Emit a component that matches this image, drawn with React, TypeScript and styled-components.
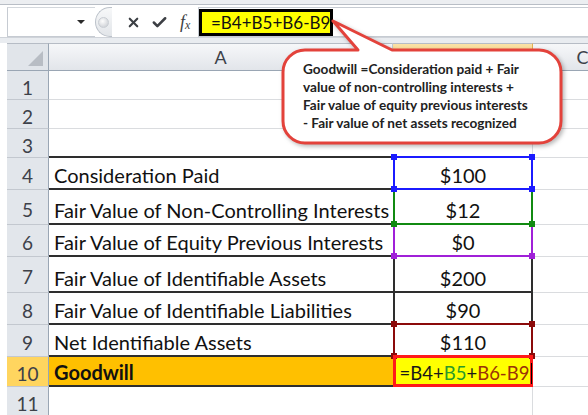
import styled, { createGlobalStyle } from "styled-components";
import { X, Check } from "lucide-react";

const GlobalStyle = createGlobalStyle`
  html, body { margin: 0; padding: 0; background: #fff; }
  body { font-family: Lato, "Noto Sans", sans-serif; }
`;

const Page = styled.div`
  position: relative;
  width: 588px;
  height: 415px;
  overflow: hidden;
  background: #fff;
`;

const TopStrip = styled.div`
  height: 4px;
  background: #eceef1;
  border-bottom: 1px solid #b9bec6;
`;

const FormulaBar = styled.div`
  display: flex;
  align-items: stretch;
  height: 32px;
  padding-left: 7px;
  box-sizing: border-box;
  background: #fff;
`;

const NameBox = styled.div`
  position: relative;
  width: 88px;
  margin-top: 2px;
  background: #fff;
  border-top: 1px solid #d3d7dc;
  border-bottom: 1px solid #c6cbd2;
  border-left: 1px solid #c6cbd2;
  box-sizing: border-box;
  display: flex;
  align-items: center;
  justify-content: flex-end;
  padding-right: 10px;
`;

const DropArrow = styled.span`
  width: 0;
  height: 0;
  border-left: 4px solid transparent;
  border-right: 4px solid transparent;
  border-top: 4px solid #2a2a2a;
`;

const Grip = styled.div`
  width: 17px;
  margin-top: 2px;
  border: 1px solid #bcc2ca;
  border-right: none;
  border-radius: 15px 0 0 15px;
  background: linear-gradient(#f7f8f9, #e2e5e9);
  box-sizing: border-box;
  display: flex;
  align-items: center;
  justify-content: flex-end;
  padding-right: 3px;
`;

const GripDot = styled.span`
  width: 9px;
  height: 9px;
  border-radius: 50%;
  background: radial-gradient(circle at 40% 35%, #fdfdfd, #c4c8ce);
  border: 1px solid #c9cdd3;
`;

const Tools = styled.div`
  width: 86px;
  margin-top: 2px;
  display: flex;
  align-items: center;
  padding-left: 14px;
  gap: 10px;
  box-sizing: border-box;
  color: #3c3f44;
`;

const Fx = styled.span`
  font-family: "Liberation Serif", serif;
  font-style: italic;
  font-size: 18px;
  color: #3c3f44;
  margin-left: 2px;
  sub {
    font-size: 12px;
    font-style: italic;
    vertical-align: -1px;
  }
`;

const FormulaField = styled.div`
  flex: 1;
  margin-top: 2px;
  border: 1px solid #c6cbd2;
  border-right: none;
  box-sizing: border-box;
  background: #fff;
  display: flex;
  align-items: stretch;
  padding: 1px 0 0 0;
`;

const FormulaHighlight = styled.div`
  width: 134px;
  height: 27px;
  box-sizing: border-box;
  background: #ffff00;
  border: 3px solid #000;
  font-family: Lato, sans-serif;
  font-size: 17px;
  color: #111;
  white-space: nowrap;
  display: flex;
  align-items: center;
  padding-left: 9px;
`;

const Band = styled.div`
  height: 5px;
  background: #e9ecf0;
  border-top: 1px solid #cfd3d9;
`;

const Sheet = styled.div`
  padding-left: 7px;
`;

const Row = styled.div<{ $h: number }>`
  display: grid;
  grid-template-columns: 42px 344px 140px 100px;
  grid-template-rows: ${p => p.$h}px;
  height: ${p => p.$h}px;
`;

const HeadCell = styled.div<{ $active?: boolean }>`
  display: flex;
  align-items: center;
  justify-content: center;
  box-sizing: border-box;
  font-size: 18px;
  color: #3d4149;
  background: ${p => (p.$active ? "linear-gradient(#fbe2a6, #f5c870)" : "linear-gradient(#f6f7f9, #e2e5ea)")};
  border-top: 1px solid #b6bcc5;
  border-right: 1px solid ${p => (p.$active ? "#e1b254" : "#c5cad1")};
  border-bottom: 1px solid #9aa6b4;
`;

const Corner = styled(HeadCell)`
  position: relative;
  background: #e1e5ea;
  border-right: 1px solid #9aa6b4;
`;

const SelectAll = styled.span`
  position: absolute;
  right: 5px;
  bottom: 4px;
  width: 0;
  height: 0;
  border-left: 15px solid transparent;
  border-bottom: 15px solid #b8bdc4;
`;

const RowHead = styled.div<{ $active?: boolean }>`
  display: flex;
  align-items: center;
  justify-content: center;
  box-sizing: border-box;
  padding-top: 4px;
  font-size: 19px;
  color: #3d4149;
  background: ${p => (p.$active ? "#ffd55f" : "#e2e6eb")};
  border-right: 1px solid #9aa6b4;
  border-bottom: 1px solid #c3c8cf;
`;

type Edge = "grid" | "thick" | "line";

const edgeColor = (e: Edge) => (e === "grid" ? "1px solid #dadcdf" : "2px solid #2e2e2e");

const LabelCell = styled.div<{ $bottom: Edge; $fill?: string; $bold?: boolean }>`
  display: flex;
  align-items: flex-end;
  box-sizing: border-box;
  padding: 0 0 1px 5px;
  font-size: 20px;
  color: #111;
  white-space: nowrap;
  overflow: hidden;
  font-weight: ${p => (p.$bold ? 700 : 400)};
  background: ${p => p.$fill || "#fff"};
  border-bottom: ${p => edgeColor(p.$bottom)};
`;

const ValueCell = styled.div<{ $bottom: Edge; $boxed?: boolean; $fill?: string }>`
  position: relative;
  display: flex;
  align-items: flex-end;
  justify-content: center;
  box-sizing: border-box;
  padding-bottom: 1px;
  font-size: 20px;
  color: #111;
  white-space: nowrap;
  background: ${p => p.$fill || "#fff"};
  border-bottom: ${p => edgeColor(p.$bottom)};
  border-left: ${p => (p.$boxed ? "2px solid #2e2e2e" : "none")};
  border-right: ${p => (p.$boxed ? "2px solid #2e2e2e" : "1px solid #dadcdf")};
`;

const GridCell = styled.div`
  box-sizing: border-box;
  border-bottom: 1px solid #dadcdf;
`;

const RefBox = styled.span<{ $color: string; $z: number; $w?: number }>`
  position: absolute;
  top: -2px;
  left: -2px;
  right: -2px;
  bottom: -2px;
  border: ${p => p.$w || 2}px solid ${p => p.$color};
  z-index: ${p => p.$z};
  pointer-events: none;
`;

const Handle = styled.span<{ $color: string; $pos: string }>`
  position: absolute;
  width: 6px;
  height: 6px;
  background: ${p => p.$color};
  ${p => p.$pos}
`;

const FormulaText = styled.span`
  position: relative;
  z-index: 12;
  font-size: 18.5px;
  white-space: nowrap;
  display: flex;
  align-items: center;
  margin-left: 6px;
  color: #1a1a1a;
`;

const Ref = styled.span<{ $color: string }>`
  color: ${p => p.$color};
`;

const Caret = styled.span`
  display: inline-block;
  width: 1px;
  height: 21px;
  margin-left: 2px;
  background: #000;
`;

const Callout = styled.div`
  position: absolute;
  left: 280px;
  top: 14px;
  width: 290px;
  height: 136px;
  z-index: 20;
`;

const CalloutText = styled.div`
  position: absolute;
  left: 23px;
  top: 46px;
  font-size: 13.6px;
  font-weight: 700;
  line-height: 18px;
  color: #222;
  white-space: nowrap;
`;

const corners = {
  tl: "top: -4px; left: -4px;",
  tr: "top: -4px; right: -4px;",
  bl: "bottom: -4px; left: -4px;",
  br: "bottom: -4px; right: -4px;",
};

const Marker = ({ color, z }: { color: string; z: number }) => (
  <RefBox $color={color} $z={z}>
    {Object.values(corners).map((pos, i) => (
      <Handle key={i} $color={color} $pos={pos} />
    ))}
  </RefBox>
);

type Line = {
  n: number;
  h: number;
  label?: string;
  value?: string;
  bottom: Edge;
  boxed?: boolean;
  marker?: [string, number];
};

const lines: Line[] = [
  { n: 1, h: 29, bottom: "grid" },
  { n: 2, h: 29, bottom: "grid" },
  { n: 3, h: 29, bottom: "thick" },
  { n: 4, h: 32, label: "Consideration Paid", value: "$100", bottom: "line", boxed: true, marker: ["#1b1bff", 9] },
  { n: 5, h: 35, label: "Fair Value of Non-Controlling Interests", value: "$12", bottom: "line", boxed: true, marker: ["#118a11", 8] },
  { n: 6, h: 32, label: "Fair Value of Equity Previous Interests", value: "$0", bottom: "line", boxed: true, marker: ["#a020d8", 7] },
  { n: 7, h: 36, label: "Fair Value of Identifiable Assets", value: "$200", bottom: "line", boxed: true },
  { n: 8, h: 32, label: "Fair Value of Identifiable Liabilities", value: "$90", bottom: "line", boxed: true },
  { n: 9, h: 32, label: "Net Identifiable Assets", value: "$110", bottom: "line", boxed: true, marker: ["#8b0a0a", 6] },
];

const CalloutShape = () => (
  <svg width="290" height="136" viewBox="0 0 290 136" style={{ filter: "drop-shadow(2px 2px 2px rgba(0,0,0,0.28))" }}>
    <path
      d="M25 36 L78 36 L53 7 L112 36 L259 36 A22 22 0 0 1 281 58 L281 107 A22 22 0 0 1 259 129 L25 129 A22 22 0 0 1 3 107 L3 58 A22 22 0 0 1 25 36 Z"
      fill="#fff"
      stroke="#e3423b"
      strokeWidth="3"
      strokeLinejoin="round"
    />
  </svg>
);

export default function App() {
  return (
    <Page>
      <GlobalStyle />
      <TopStrip />
      <FormulaBar>
        <NameBox>
          <DropArrow />
        </NameBox>
        <Grip>
          <GripDot />
        </Grip>
        <Tools>
          <X size={15} strokeWidth={3.4} />
          <Check size={17} strokeWidth={3.6} />
          <Fx>
            f<sub>x</sub>
          </Fx>
        </Tools>
        <FormulaField>
          <FormulaHighlight>=B4+B5+B6-B9</FormulaHighlight>
        </FormulaField>
      </FormulaBar>
      <Band />
      <Sheet>
        <Row $h={28}>
          <Corner>
            <SelectAll />
          </Corner>
          <HeadCell>A</HeadCell>
          {/* the B letter sits under the callout */}
          <HeadCell $active />
          <HeadCell>C</HeadCell>
        </Row>
        {lines.map(l => (
          <Row key={l.n} $h={l.h}>
            <RowHead>{l.n}</RowHead>
            <LabelCell $bottom={l.bottom}>{l.label}</LabelCell>
            <ValueCell $bottom={l.bottom} $boxed={l.boxed}>
              {l.value}
              {l.marker && <Marker color={l.marker[0]} z={l.marker[1]} />}
            </ValueCell>
            <GridCell />
          </Row>
        ))}
        <Row $h={30}>
          <RowHead $active>10</RowHead>
          <LabelCell $bottom="line" $fill="#ffc000" $bold>
            Goodwill
          </LabelCell>
          <ValueCell $bottom="line" $boxed $fill="#ffff00">
            <FormulaText>
              =B4+<Ref $color="#2a9a2a">B5</Ref>+<Ref $color="#9a3208">B6-B9</Ref>
              <Caret />
            </FormulaText>
            <RefBox $color="#ff1a1a" $z={11} $w={3} />
          </ValueCell>
          <GridCell />
        </Row>
        <Row $h={30}>
          <RowHead>11</RowHead>
          <LabelCell $bottom="grid" />
          <ValueCell $bottom="grid" />
          <GridCell />
        </Row>
      </Sheet>
      <Callout>
        <CalloutShape />
        <CalloutText>
          Goodwill =Consideration paid + Fair
          <br />
          value of non-controlling interests +
          <br />
          Fair value of equity previous interests
          <br />- Fair value of net assets recognized
        </CalloutText>
      </Callout>
    </Page>
  );
}
